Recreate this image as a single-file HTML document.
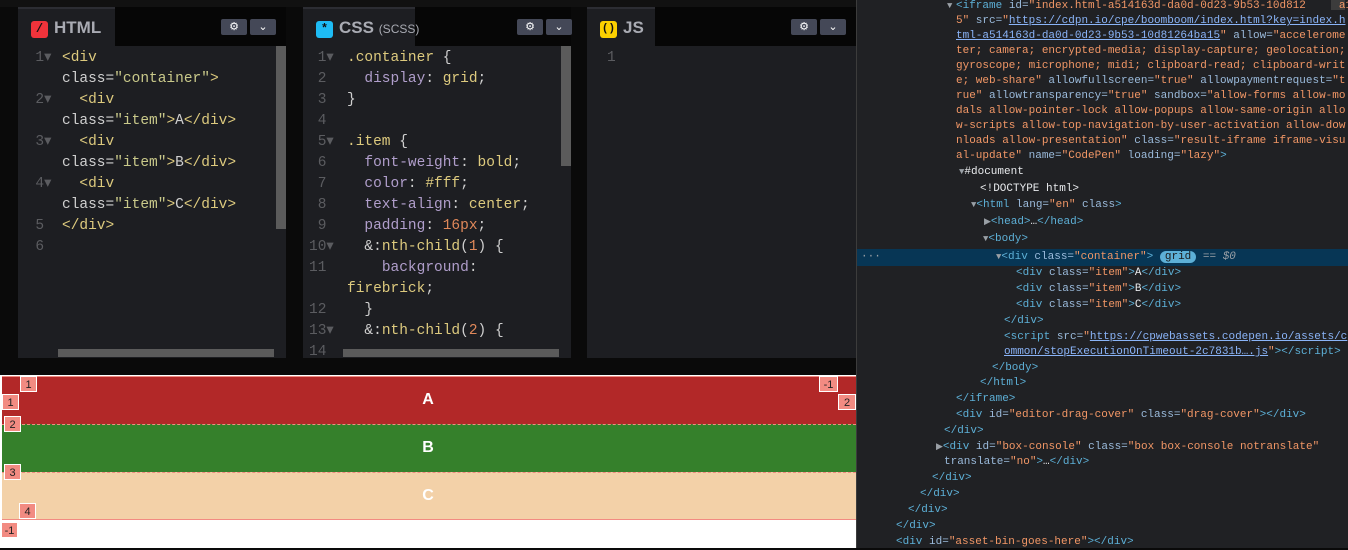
<!DOCTYPE html>
<html><head><meta charset="utf-8"><style>
*{margin:0;padding:0;box-sizing:border-box}
body{width:1348px;height:548px;overflow:hidden;background:#0a0a0a;position:relative;font-family:"Liberation Sans",sans-serif}
.a{position:absolute}
.panel{position:absolute;top:7px;height:351px;background:#1d1e22}
.hdr{position:absolute;left:0;top:0;right:0;height:39px;background:#060606}
.tab{position:absolute;left:0;top:0;height:39px;background:#1d1e22;border-top:2px solid #2c2d33}
.tab .ic{position:absolute;left:13px;top:12px;width:17px;height:17px;border-radius:3px;font:bold 12px "Liberation Mono",monospace;text-align:center;line-height:17px;color:#111}
.tab .t{position:absolute;left:36px;top:9px;font:bold 17px "Liberation Sans",sans-serif;color:#a9abb3;white-space:nowrap}
.tab .t small{font-weight:normal;font-size:12px}
.btn{position:absolute;top:12px;width:26px;height:16px;background:#444857;border-radius:2px;color:#fff;font-size:11px;text-align:center;line-height:16px}
.code{position:absolute;left:0;top:39px;right:0;bottom:0;font:14.5px "Liberation Mono",monospace;color:#cfcfcf}
.ln{position:absolute;white-space:pre;height:21px;line-height:21px}
.n{color:#5b5c60}
.g{color:#ddca7e}.s{color:#c9c98a}.p{color:#b09ecb}.o{color:#e0885a}
.vs{position:absolute;width:10px;background:#5b5b5b}
.hs{position:absolute;height:8px;background:#5b5b5b}
.dt{position:absolute;left:856px;top:0;width:492px;height:548px;background:#202124;border-left:1px solid #3c3c3c;font:11px "Liberation Mono",monospace;color:#9bbbdc}
.d{position:absolute;white-space:pre;line-height:15px;height:15px}
.tg{color:#5db0d7}.an{color:#9bbbdc}.av{color:#f29766}.lk{color:#8ab4f8;text-decoration:underline}.w{color:#e8eaed}
.tri{color:#9aa0a6;font-size:9px}
.lab{position:absolute;background:#f28b82;color:#222;font:11px "Liberation Sans",sans-serif;text-align:center;line-height:16px;height:16px;border:1px solid #fff}
</style></head><body>
<div class="a" style="left:0;top:0;width:856px;height:7px;background:#111"></div>

<!-- HTML panel -->
<div class="panel" style="left:18px;width:268px">
 <div class="hdr"></div>
 <div class="tab" style="width:97px"><div class="ic" style="background:#f0333b;color:#111">/</div><div class="t">HTML</div></div>
 <div class="btn" style="left:203px">&#9881;</div><div class="btn" style="left:232px">&#8964;</div>
 <div class="code">
  <div class="ln" style="left:0;top:2px"><span class="n">  1▾ </span></div>
  <div class="ln" style="left:44px;top:2px"><span class="g">&lt;div</span></div>
  <div class="ln" style="left:44px;top:23px">class=<span class="s">"container"</span><span class="g">&gt;</span></div>
  <div class="ln" style="left:0;top:44px"><span class="n">  2▾ </span></div>
  <div class="ln" style="left:44px;top:44px">  <span class="g">&lt;div</span></div>
  <div class="ln" style="left:44px;top:65px">class=<span class="s">"item"</span><span class="g">&gt;</span>A<span class="g">&lt;/div&gt;</span></div>
  <div class="ln" style="left:0;top:86px"><span class="n">  3▾ </span></div>
  <div class="ln" style="left:44px;top:86px">  <span class="g">&lt;div</span></div>
  <div class="ln" style="left:44px;top:107px">class=<span class="s">"item"</span><span class="g">&gt;</span>B<span class="g">&lt;/div&gt;</span></div>
  <div class="ln" style="left:0;top:128px"><span class="n">  4▾ </span></div>
  <div class="ln" style="left:44px;top:128px">  <span class="g">&lt;div</span></div>
  <div class="ln" style="left:44px;top:149px">class=<span class="s">"item"</span><span class="g">&gt;</span>C<span class="g">&lt;/div&gt;</span></div>
  <div class="ln" style="left:0;top:170px"><span class="n">  5  </span></div>
  <div class="ln" style="left:44px;top:170px"><span class="g">&lt;/div&gt;</span></div>
  <div class="ln" style="left:0;top:191px"><span class="n">  6</span></div>
 </div>
 <div class="vs" style="left:258px;top:39px;height:183px"></div>
 <div class="hs" style="left:40px;top:342px;width:216px"></div>
</div>

<!-- CSS panel -->
<div class="panel" style="left:303px;width:268px">
 <div class="hdr"></div>
 <div class="tab" style="width:112px"><div class="ic" style="background:#1ebcf5">*</div><div class="t">CSS <small>(SCSS)</small></div></div>
 <div class="btn" style="left:214px">&#9881;</div><div class="btn" style="left:243px">&#8964;</div>
 <div class="code">
  <div class="ln n" style="left:6px;top:2px"> 1▾</div><div class="ln" style="left:44px;top:2px"><span class="g">.container</span> {</div>
  <div class="ln n" style="left:6px;top:23px"> 2</div><div class="ln" style="left:44px;top:23px">  <span class="p">display</span>: <span class="g">grid</span>;</div>
  <div class="ln n" style="left:6px;top:44px"> 3</div><div class="ln" style="left:44px;top:44px">}</div>
  <div class="ln n" style="left:6px;top:65px"> 4</div>
  <div class="ln n" style="left:6px;top:86px"> 5▾</div><div class="ln" style="left:44px;top:86px"><span class="g">.item</span> {</div>
  <div class="ln n" style="left:6px;top:107px"> 6</div><div class="ln" style="left:44px;top:107px">  <span class="p">font-weight</span>: <span class="g">bold</span>;</div>
  <div class="ln n" style="left:6px;top:128px"> 7</div><div class="ln" style="left:44px;top:128px">  <span class="p">color</span>: <span class="g">#fff</span>;</div>
  <div class="ln n" style="left:6px;top:149px"> 8</div><div class="ln" style="left:44px;top:149px">  <span class="p">text-align</span>: <span class="g">center</span>;</div>
  <div class="ln n" style="left:6px;top:170px"> 9</div><div class="ln" style="left:44px;top:170px">  <span class="p">padding</span>: <span class="o">16px</span>;</div>
  <div class="ln n" style="left:6px;top:191px">10▾</div><div class="ln" style="left:44px;top:191px">  &amp;:<span class="g">nth-child</span>(<span class="o">1</span>) {</div>
  <div class="ln n" style="left:6px;top:212px">11</div><div class="ln" style="left:44px;top:212px">    <span class="p">background</span>:</div>
  <div class="ln" style="left:44px;top:233px"><span class="g">firebrick</span>;</div>
  <div class="ln n" style="left:6px;top:254px">12</div><div class="ln" style="left:44px;top:254px">  }</div>
  <div class="ln n" style="left:6px;top:275px">13▾</div><div class="ln" style="left:44px;top:275px">  &amp;:<span class="g">nth-child</span>(<span class="o">2</span>) {</div>
  <div class="ln n" style="left:6px;top:296px">14</div>
 </div>
 <div class="vs" style="left:258px;top:39px;height:120px"></div>
 <div class="hs" style="left:40px;top:342px;width:216px"></div>
</div>

<!-- JS panel -->
<div class="panel" style="left:587px;width:269px">
 <div class="hdr"></div>
 <div class="tab" style="width:68px"><div class="ic" style="background:#fcd000;font-size:11px">()</div><div class="t">JS</div></div>
 <div class="btn" style="left:204px">&#9881;</div><div class="btn" style="left:233px">&#8964;</div>
 <div class="code"><div class="ln n" style="left:20px;top:2px">1</div></div>
</div>

<!-- result -->
<div class="a" style="left:0;top:375px;width:856px;height:173px;background:#fff"></div>
<div class="a" style="left:2px;top:376px;width:854px;height:48px;background:#b22828;border-top:1px solid #f28b82"></div>
<div class="a" style="left:2px;top:424px;width:854px;height:48px;background:#35802b;border-top:1px dashed #f28b82"></div>
<div class="a" style="left:2px;top:472px;width:854px;height:48px;background:#f3d1a8;border-top:1px dashed #f28b82;border-bottom:1px solid #f28b82"></div>
<div class="a" style="left:0;top:376px;width:856px;text-align:center;font:bold 16px 'Liberation Sans',sans-serif;color:#fff;line-height:48px">A</div>
<div class="a" style="left:0;top:424px;width:856px;text-align:center;font:bold 16px 'Liberation Sans',sans-serif;color:#fff;line-height:48px">B</div>
<div class="a" style="left:0;top:472px;width:856px;text-align:center;font:bold 16px 'Liberation Sans',sans-serif;color:#fff;line-height:48px">C</div>
<div class="lab" style="left:20px;top:376px;width:17px">1</div>
<div class="lab" style="left:2px;top:394px;width:17px">1</div>
<div class="lab" style="left:819px;top:376px;width:19px">-1</div>
<div class="lab" style="left:838px;top:394px;width:18px">2</div>
<div class="lab" style="left:4px;top:416px;width:17px">2</div>
<div class="lab" style="left:4px;top:464px;width:17px">3</div>
<div class="lab" style="left:19px;top:503px;width:17px">4</div>
<div class="lab" style="left:1px;top:522px;width:17px">-1</div>

<!-- devtools -->
<div class="dt">
<div class="a" style="left:474px;top:0;width:14px;height:10px;background:#3c3c3c"></div>
<div class="d" style="left:90px;top:-1px"><span class="tri">▼</span></div>
<div class="d" style="left:99px;top:-1px"><span class="tg">&lt;iframe</span> id=<span class="av">"index.html-a514163d-da0d-0d23-9b53-10d812</span>     <span class="av">a1</span></div>
<div class="d" style="left:99px;top:14px"><span class="av">5"</span> src=<span class="av">"</span><span class="lk">https://cdpn.io/cpe/boomboom/index.html?key=index.h</span></div>
<div class="d" style="left:99px;top:29px"><span class="lk">tml-a514163d-da0d-0d23-9b53-10d81264ba15</span><span class="av">"</span> allow=<span class="av">"accelerome</span></div>
<div class="d av" style="left:99px;top:44px">ter; camera; encrypted-media; display-capture; geolocation;</div>
<div class="d av" style="left:99px;top:59px">gyroscope; microphone; midi; clipboard-read; clipboard-writ</div>
<div class="d" style="left:99px;top:74px"><span class="av">e; web-share"</span> allowfullscreen=<span class="av">"true"</span> allowpaymentrequest=<span class="av">"t</span></div>
<div class="d" style="left:99px;top:89px"><span class="av">rue"</span> allowtransparency=<span class="av">"true"</span> sandbox=<span class="av">"allow-forms allow-mo</span></div>
<div class="d av" style="left:99px;top:104px">dals allow-pointer-lock allow-popups allow-same-origin allo</div>
<div class="d av" style="left:99px;top:119px">w-scripts allow-top-navigation-by-user-activation allow-dow</div>
<div class="d" style="left:99px;top:134px"><span class="av">nloads allow-presentation"</span> class=<span class="av">"result-iframe iframe-visu</span></div>
<div class="d" style="left:99px;top:149px"><span class="av">al-update"</span> name=<span class="av">"CodePen"</span> loading=<span class="av">"lazy"</span><span class="tg">&gt;</span></div>
<div class="d w" style="left:102px;top:165px"><span class="tri">▼</span>#document</div>
<div class="d w" style="left:123px;top:182px">&lt;!DOCTYPE html&gt;</div>
<div class="d" style="left:114px;top:198px"><span class="tri">▼</span><span class="tg">&lt;html</span> lang=<span class="av">"en"</span> class<span class="tg">&gt;</span></div>
<div class="d" style="left:127px;top:215px"><span class="tri">▶</span><span class="tg">&lt;head&gt;</span><span class="w">…</span><span class="tg">&lt;/head&gt;</span></div>
<div class="d" style="left:126px;top:232px"><span class="tri">▼</span><span class="tg">&lt;body&gt;</span></div>
<div class="a" style="left:0;top:249px;width:492px;height:17px;background:#073655"></div>
<div class="d" style="left:4px;top:250px;color:#9aa0a6">···</div>
<div class="d" style="left:139px;top:250px"><span class="tri">▼</span><span class="tg">&lt;div</span> class=<span class="av">"container"</span><span class="tg">&gt;</span> <span style="background:#5db0d7;color:#1b1b1b;border-radius:7px;padding:0 5px">grid</span> <span style="color:#9aa0a6">== <i>$0</i></span></div>
<div class="d" style="left:159px;top:266px"><span class="tg">&lt;div</span> class=<span class="av">"item"</span><span class="tg">&gt;</span><span class="w">A</span><span class="tg">&lt;/div&gt;</span></div>
<div class="d" style="left:159px;top:282px"><span class="tg">&lt;div</span> class=<span class="av">"item"</span><span class="tg">&gt;</span><span class="w">B</span><span class="tg">&lt;/div&gt;</span></div>
<div class="d" style="left:159px;top:298px"><span class="tg">&lt;div</span> class=<span class="av">"item"</span><span class="tg">&gt;</span><span class="w">C</span><span class="tg">&lt;/div&gt;</span></div>
<div class="d tg" style="left:147px;top:314px">&lt;/div&gt;</div>
<div class="d" style="left:147px;top:330px"><span class="tg">&lt;script</span> src=<span class="av">"</span><span class="lk">https://cpwebassets.codepen.io/assets/c</span></div>
<div class="d" style="left:147px;top:345px"><span class="lk">ommon/stopExecutionOnTimeout-2c7831b….js</span><span class="av">"</span><span class="tg">&gt;&lt;/script&gt;</span></div>
<div class="d tg" style="left:135px;top:361px">&lt;/body&gt;</div>
<div class="d tg" style="left:123px;top:376px">&lt;/html&gt;</div>
<div class="d tg" style="left:99px;top:392px">&lt;/iframe&gt;</div>
<div class="d" style="left:99px;top:408px"><span class="tg">&lt;div</span> id=<span class="av">"editor-drag-cover"</span> class=<span class="av">"drag-cover"</span><span class="tg">&gt;&lt;/div&gt;</span></div>
<div class="d tg" style="left:87px;top:424px">&lt;/div&gt;</div>
<div class="d" style="left:79px;top:440px"><span class="tri">▶</span><span class="tg">&lt;div</span> id=<span class="av">"box-console"</span> class=<span class="av">"box box-console notranslate"</span></div>
<div class="d" style="left:87px;top:455px">translate=<span class="av">"no"</span><span class="tg">&gt;</span><span class="w">…</span><span class="tg">&lt;/div&gt;</span></div>
<div class="d tg" style="left:75px;top:471px">&lt;/div&gt;</div>
<div class="d tg" style="left:63px;top:487px">&lt;/div&gt;</div>
<div class="d tg" style="left:51px;top:503px">&lt;/div&gt;</div>
<div class="d tg" style="left:39px;top:519px">&lt;/div&gt;</div>
<div class="d" style="left:39px;top:535px"><span class="tg">&lt;div</span> id=<span class="av">"asset-bin-goes-here"</span><span class="tg">&gt;&lt;/div&gt;</span></div>
</div>
</body></html>
